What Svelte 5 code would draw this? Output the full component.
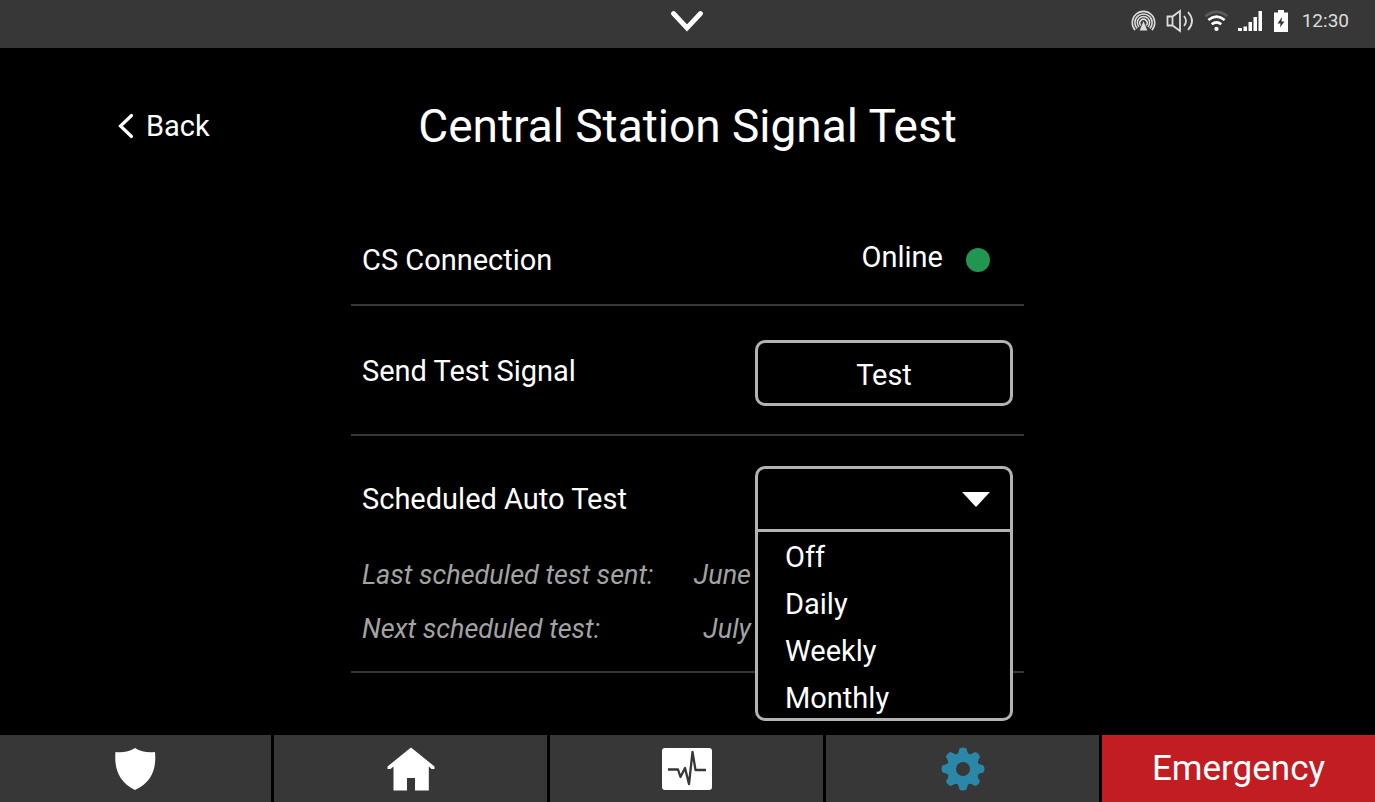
<script>
  let open = true;
  let schedule = "";

  const schedules = ["Off", "Daily", "Weekly", "Monthly"];

  function choose(option) {
    schedule = option;
    open = false;
  }
</script>

<div class="panel">
  <header class="status-bar">
    <button class="pull-down" aria-label="Show quick settings">
      <svg width="34" height="24" viewBox="0 0 34 24">
        <path d="M2.500 4.500 L16 19 L29.500 4.500" fill="none" stroke="#fff" stroke-width="4.800" stroke-linecap="round" />
      </svg>
    </button>
    <div class="status">
      <svg width="25" height="22" viewBox="0 0 26 22" fill="none" stroke="#ddd" stroke-width="1.6">
        <path d="M4.3 20.5 A11.7 11.7 0 1 1 21.7 20.5" />
        <path d="M6.4 18.8 A9 9 0 1 1 19.6 18.8" />
        <path d="M8.4 17.2 A6.4 6.4 0 1 1 17.6 17.2" />
        <path d="M10.2 15.6 A3.8 3.8 0 1 1 15.8 15.6" />
        <path d="M9 21 L13 11 L17 21 Z" fill="#ddd" stroke="none" />
      </svg>
      <svg class="sound" width="29" height="24" viewBox="0 0 29 24" fill="none" stroke="#ddd" stroke-width="1.8">
        <path d="M1.5 7.5 H6.5 L14 2 V22 L6.5 16.5 H1.5 Z M6.5 7.5 V16.5" />
        <path d="M18 7 Q22 12 18 17 M22 3 Q30 12 22 21" />
      </svg>
      <svg class="wifi" width="23" height="24" viewBox="1 0 24 24" fill="none" stroke="#fff" stroke-width="2.7">
        <path d="M1.5 7 Q13 -2 24.5 7" stroke="#5c5c5c" />
        <path d="M4.5 11 Q13 4 21.5 11" />
        <path d="M8 15.5 Q13 11.2 18 15.5" />
        <circle cx="13" cy="20.3" r="2.2" fill="#fff" stroke="none" />
      </svg>
      <svg class="signal" width="26" height="22" viewBox="0 0 26 22" fill="#fff">
        <rect x="0" y="18" width="4" height="3" />
        <rect x="5.5" y="16.5" width="3.5" height="4.5" />
        <rect x="10.5" y="12" width="3.5" height="9" />
        <rect x="15.5" y="7" width="3.5" height="14" />
        <rect x="20.5" y="1" width="3.5" height="20" />
      </svg>
      <svg class="battery" width="14" height="24" viewBox="0 0 14 24">
        <path d="M4 1 H10 V3.5 H14 V23 H0 V3.5 H4 Z" fill="#fff" />
        <path d="M8 8 L3.5 14.5 H6.5 L6 18.5 L10.5 12.5 H7.5 Z" fill="#373737" />
      </svg>
      <time>12:30</time>
    </div>
  </header>

  <main>
    <div class="heading">
      <a class="back" href="#back">
        <svg width="16" height="26" viewBox="0 0 16 26">
          <path d="M13.5 2.5 L2.5 13 L13.5 23.5" fill="none" stroke="#fff" stroke-width="3.2" stroke-linecap="round" />
        </svg>
        Back
      </a>
      <h1>Central Station Signal Test</h1>
    </div>

    <div class="settings">
      <section class="row connection">
        <span>CS Connection</span>
        <span class="online">Online <i class="dot"></i></span>
      </section>

      <section class="row send">
        <span id="send-label">Send Test Signal</span>
        <button class="box test" aria-describedby="send-label">Test</button>
      </section>

      <section class="row auto">
        <label for="schedule">Scheduled Auto Test</label>
        <div class="dropdown">
          <select
            id="schedule"
            class="box"
            class:open
            bind:value={schedule}
            on:mousedown|preventDefault={() => (open = !open)}
          >
            <option value=""></option>
            {#each schedules as option}
              <option value={option}>{option}</option>
            {/each}
          </select>
          <svg class="arrow" width="28" height="15" viewBox="0 0 28 15">
            <path d="M0 0 H28 L14 15 Z" fill="#fff" />
          </svg>
          {#if open}
            <ul class="menu">
              {#each schedules as option}
                <li><button on:click={() => choose(option)}>{option}</button></li>
              {/each}
            </ul>
          {/if}
        </div>
        <dl>
          <div>
            <dt>Last scheduled test sent:</dt>
            <dd>June</dd>
          </div>
          <div>
            <dt>Next scheduled test:</dt>
            <dd>July</dd>
          </div>
        </dl>
      </section>
    </div>
  </main>

  <nav>
    <a href="#security" aria-label="Security">
      <svg width="42" height="44" viewBox="0 0 42 44">
        <path d="M20 1 Q11 6.500 0.500 5 C-1 22 4 35 20 43 C37 35 41.500 22 40 5 Q29 6.500 20 1 Z" fill="#fff" />
      </svg>
    </a>
    <a href="#home" aria-label="Home">
      <svg width="48" height="44" viewBox="0 0 48 44">
        <path
          d="M24 0.500 L47.500 19.500 V22 H44.500 L41.800 19.500 V43.500 H28 V31 H20 V43.500 H6.500 V19.500 L3.500 22 H0.500 V19.500 Z"
          fill="#fff"
        />
      </svg>
    </a>
    <a href="#activity" aria-label="Activity">
      <svg width="50" height="42" viewBox="0 0 50 42">
        <rect width="50" height="42" rx="3" fill="#fff" />
        <path
          d="M6 21.500 H16 L18.500 29 L23 20 L27 36 L30.500 4 L33.500 22 H44"
          fill="none"
          stroke="#373737"
          stroke-width="2.300"
          stroke-linejoin="round"
        />
      </svg>
    </a>
    <a href="#settings" aria-label="Settings">
      <svg width="44" height="44" viewBox="-22 -22 44 44">
        <g fill="#2b87a8">
          {#each [0, 45, 90, 135, 180, 225, 270, 315] as angle}
            <path d="M-7.500 -13 Q-4 -16 -3.800 -20 Q-3 -21.500 0 -21.500 Q3 -21.500 3.800 -20 Q4 -16 7.500 -13 Z" transform="rotate({angle})" />
          {/each}
        </g>
        <circle r="11.500" fill="none" stroke="#2b87a8" stroke-width="9" />
      </svg>
    </a>
    <button class="emergency">Emergency</button>
  </nav>
</div>

<style>
  :global(body) {
    margin: 0;
    background: #000;
  }

  .panel,
  .panel * {
    box-sizing: border-box;
  }

  .panel {
    display: flex;
    flex-direction: column;
    min-height: 100vh;
    background: #000;
    color: #fff;
    font-family: Roboto, sans-serif;
    font-size: 29px;
    line-height: 36px;
  }

  button {
    padding: 0;
    border: 0;
    background: none;
    color: inherit;
    font: inherit;
    cursor: pointer;
  }

  a {
    color: inherit;
    text-decoration: none;
  }

  svg {
    display: block;
    flex: none;
  }

  /* status bar */

  .status-bar {
    display: grid;
    grid-template-columns: 1fr auto 1fr;
    align-items: center;
    height: 48px;
    padding: 0 26px 6px;
    background: #373737;
  }

  .pull-down {
    grid-column: 2;
  }

  .status {
    display: flex;
    justify-content: flex-end;
    align-items: center;
    gap: 10px;
    color: #ddd;
    font-size: 19px;
    line-height: 24px;
  }

  .status time {
    margin-left: 4px;
  }

  /* page heading */

  main {
    flex: 1;
  }

  .heading {
    display: grid;
    grid-template-columns: 1fr auto 1fr;
    align-items: center;
    padding: 50px 118px 62px;
  }

  .back {
    display: flex;
    align-items: center;
    gap: 12px;
  }

  h1 {
    margin: 0;
    font-size: 46px;
    font-weight: 400;
    line-height: 56px;
  }

  /* settings list */

  .settings {
    max-width: 673px;
    margin: 0 auto;
  }

  .row {
    display: grid;
    grid-template-columns: 1fr 258px;
    align-items: center;
    padding: 0 11px;
    border-bottom: 2px solid #373737;
  }

  .connection {
    height: 90px;
  }

  .online {
    display: flex;
    justify-content: flex-end;
    align-items: flex-end;
    gap: 23px;
    padding: 0 23px 6px 0;
    line-height: 30px;
  }

  .dot {
    width: 24px;
    height: 24px;
    border-radius: 50%;
    background: #219653;
  }

  .send {
    padding-top: 34px;
    padding-bottom: 28px;
  }

  .send span {
    padding-bottom: 4px;
  }

  .auto {
    padding-top: 30px;
    padding-bottom: 15px;
  }

  .box {
    display: block;
    width: 100%;
    height: 66px;
    border: 3px solid #b3b3b3;
    border-radius: 10px;
    background: #000;
    color: #fff;
    font: inherit;
  }

  .test {
    padding-top: 4px;
  }

  .dropdown {
    position: relative;
  }

  select {
    padding: 0 60px 0 27px;
    appearance: none;
    outline: none;
  }

  select.open {
    border-bottom-left-radius: 0;
    border-bottom-right-radius: 0;
  }

  .arrow {
    position: absolute;
    top: 26px;
    right: 23px;
    pointer-events: none;
  }

  .menu {
    position: absolute;
    top: 100%;
    left: 0;
    right: 0;
    z-index: 1;
    display: grid;
    gap: 7px;
    margin: 0;
    padding: 5px 0 0;
    border: 3px solid #b3b3b3;
    border-top: 0;
    border-radius: 0 0 10px 10px;
    background: #000;
    list-style: none;
  }

  .menu button {
    display: block;
    width: 100%;
    padding: 0 27px;
    line-height: 40px;
    text-align: left;
  }

  dl {
    margin: 16px 4px 0 0;
    color: #a3a3a3;
    font-size: 27px;
    font-style: italic;
    line-height: 54px;
  }

  dl div {
    display: flex;
    justify-content: space-between;
  }

  dd {
    margin: 0;
  }

  /* bottom navigation */

  nav {
    display: grid;
    grid-template-columns: 271fr repeat(4, 273fr);
    gap: 3px;
    height: 67px;
  }

  nav a {
    display: flex;
    justify-content: center;
    align-items: center;
    background: #373737;
  }

  .emergency {
    background: #c21d23;
    font-size: 35px;
  }
</style>
